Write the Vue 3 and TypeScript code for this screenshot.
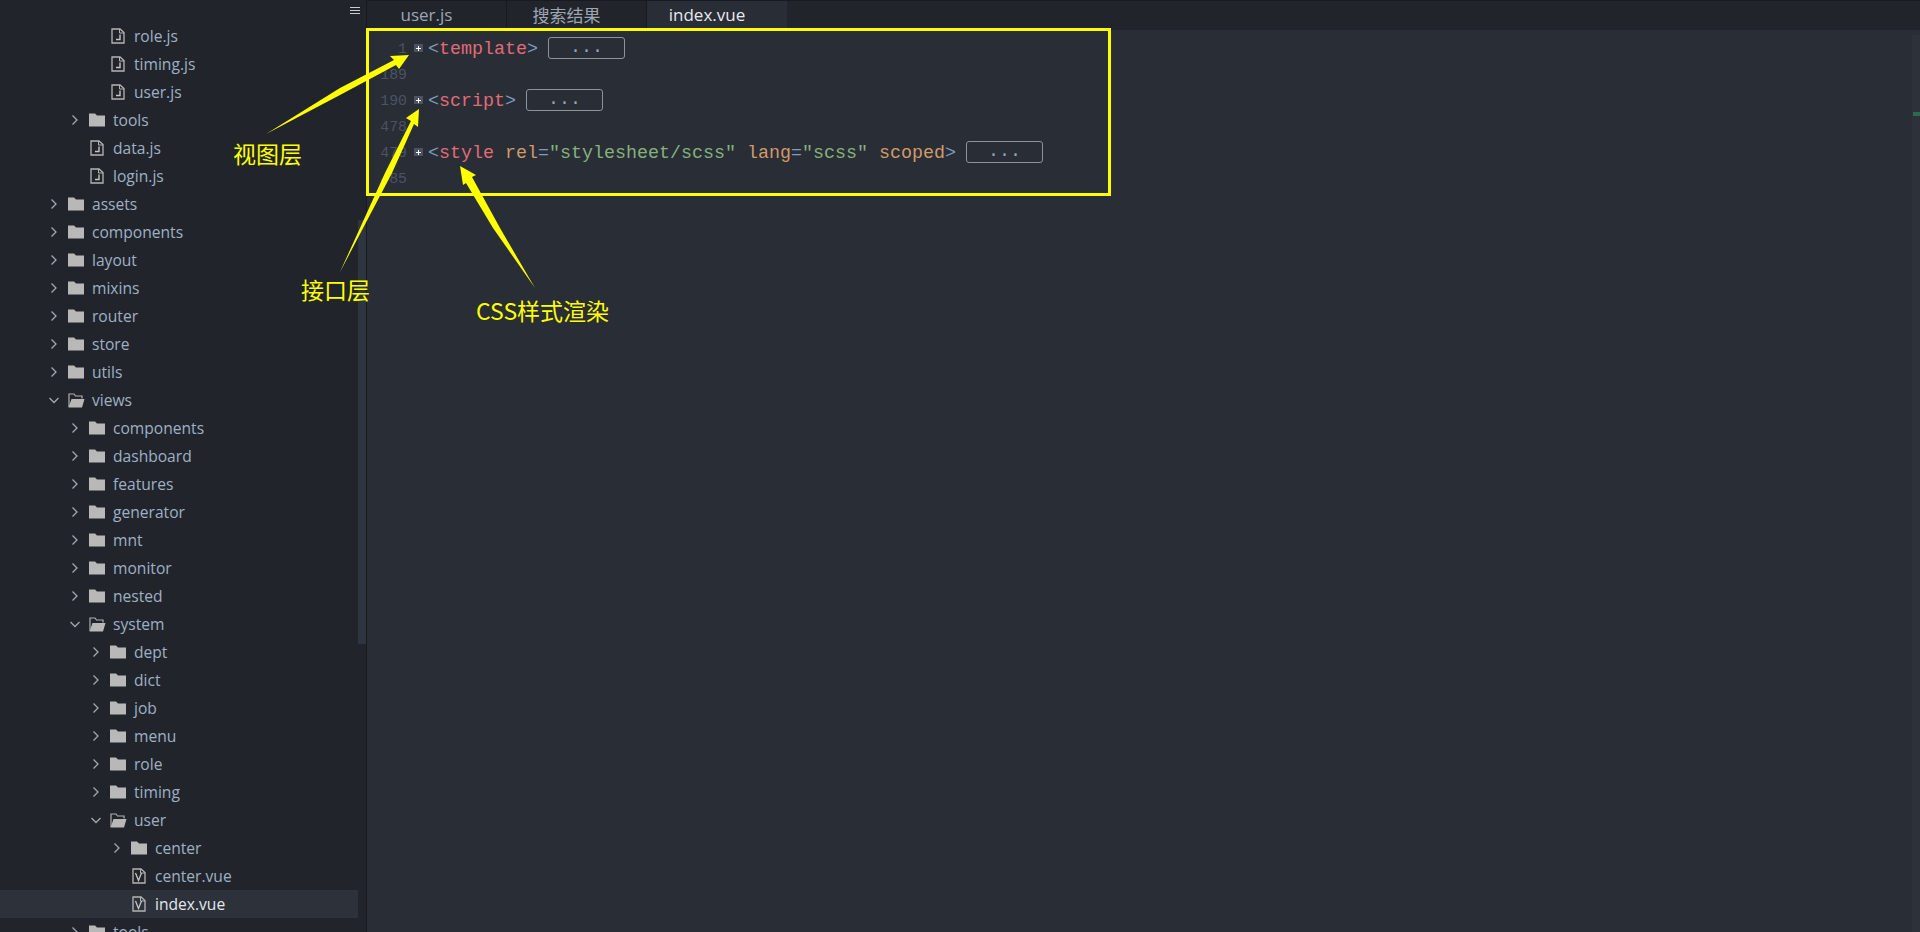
<script setup lang="ts">
type Kind = 'folder' | 'open' | 'js' | 'vue'
interface Row { name: string; level: number; kind: Kind; selected?: boolean }

const rows: Row[] = [
  { name: 'role.js', level: 2, kind: 'js' },
  { name: 'timing.js', level: 2, kind: 'js' },
  { name: 'user.js', level: 2, kind: 'js' },
  { name: 'tools', level: 1, kind: 'folder' },
  { name: 'data.js', level: 1, kind: 'js' },
  { name: 'login.js', level: 1, kind: 'js' },
  { name: 'assets', level: 0, kind: 'folder' },
  { name: 'components', level: 0, kind: 'folder' },
  { name: 'layout', level: 0, kind: 'folder' },
  { name: 'mixins', level: 0, kind: 'folder' },
  { name: 'router', level: 0, kind: 'folder' },
  { name: 'store', level: 0, kind: 'folder' },
  { name: 'utils', level: 0, kind: 'folder' },
  { name: 'views', level: 0, kind: 'open' },
  { name: 'components', level: 1, kind: 'folder' },
  { name: 'dashboard', level: 1, kind: 'folder' },
  { name: 'features', level: 1, kind: 'folder' },
  { name: 'generator', level: 1, kind: 'folder' },
  { name: 'mnt', level: 1, kind: 'folder' },
  { name: 'monitor', level: 1, kind: 'folder' },
  { name: 'nested', level: 1, kind: 'folder' },
  { name: 'system', level: 1, kind: 'open' },
  { name: 'dept', level: 2, kind: 'folder' },
  { name: 'dict', level: 2, kind: 'folder' },
  { name: 'job', level: 2, kind: 'folder' },
  { name: 'menu', level: 2, kind: 'folder' },
  { name: 'role', level: 2, kind: 'folder' },
  { name: 'timing', level: 2, kind: 'folder' },
  { name: 'user', level: 2, kind: 'open' },
  { name: 'center', level: 3, kind: 'folder' },
  { name: 'center.vue', level: 3, kind: 'vue' },
  { name: 'index.vue', level: 3, kind: 'vue', selected: true },
  { name: 'tools', level: 1, kind: 'folder' },
]

const tabs = [
  { name: 'user.js', active: false },
  { name: '搜索结果', active: false },
  { name: 'index.vue', active: true },
]

const indent = (level: number) => `${46 + 21 * level}px`
</script>

<template>
  <div class="app">
    <aside class="sidebar">
      <div class="menu-btn"><i></i><i></i><i></i></div>
      <div class="tree">
        <div
          v-for="(row, i) in rows"
          :key="i"
          class="row"
          :class="{ selected: row.selected }"
          :style="{ paddingLeft: indent(row.level) }"
        >
          <span class="chev">
            <svg v-if="row.kind === 'folder'" width="16" height="16" viewBox="0 0 16 16">
              <path d="M5.500 3.500 L10 8 L5.500 12.500" fill="none" stroke="#a3a8b0" stroke-width="1.300" />
            </svg>
            <svg v-else-if="row.kind === 'open'" width="16" height="16" viewBox="0 0 16 16">
              <path d="M3.500 6 L8 10.500 L12.500 6" fill="none" stroke="#a3a8b0" stroke-width="1.300" />
            </svg>
          </span>
          <span class="icon">
            <svg v-if="row.kind === 'folder'" width="16" height="14" viewBox="0 0 16 14">
              <path d="M0 0.500 H6 L8 2.500 H16 V13.500 H0 Z" fill="#b8b8b8" />
            </svg>
            <svg v-else-if="row.kind === 'open'" width="17" height="15" viewBox="0 0 17 15">
              <path d="M1 14 V1 H6 L7.500 3 H14 V5.500" fill="none" stroke="#b0b0b0" stroke-width="1.200" />
              <path d="M0.500 14.500 L3.500 6 H16.500 L14 14.500 Z" fill="#b8b8b8" />
            </svg>
            <svg v-else-if="row.kind === 'js'" class="file" width="14" height="16" viewBox="0 0 14 16">
              <path d="M1 1 H9 L13 4.500 V15 H1 Z" fill="none" stroke="#b4b4b4" stroke-width="1.300" />
              <path d="M8.500 1 V5 H13" fill="none" stroke="#b4b4b4" stroke-width="1" />
              <path d="M9 6.500 V11.500 H5" fill="none" stroke="#c4c4c4" stroke-width="1.400" />
            </svg>
            <svg v-else class="file" width="14" height="16" viewBox="0 0 14 16">
              <path d="M1 1 H9 L13 4.500 V15 H1 Z" fill="none" stroke="#b4b4b4" stroke-width="1.300" />
              <path d="M8.500 1 V5 H13" fill="none" stroke="#b4b4b4" stroke-width="1" />
              <path d="M3.500 5 L6.500 12.500 L9.500 5" fill="none" stroke="#c4c4c4" stroke-width="1.300" />
            </svg>
          </span>
          <span class="name">{{ row.name }}</span>
        </div>
      </div>
      <div class="side-scroll"></div>
    </aside>

    <main class="main">
      <nav class="tabs">
        <div v-for="tab in tabs" :key="tab.name" class="tab" :class="{ active: tab.active }">{{ tab.name }}</div>
      </nav>
      <section class="editor">
        <div class="line">
          <span class="num">1</span><span class="fold"></span>
          <code><span class="p">&lt;</span><span class="t">template</span><span class="p">&gt;</span> <span class="more">  ...  </span></code>
        </div>
        <div class="line"><span class="num">189</span></div>
        <div class="line">
          <span class="num">190</span><span class="fold"></span>
          <code><span class="p">&lt;</span><span class="t">script</span><span class="p">&gt;</span> <span class="more">  ...  </span></code>
        </div>
        <div class="line"><span class="num">478</span></div>
        <div class="line">
          <span class="num">479</span><span class="fold"></span>
          <code><span class="p">&lt;</span><span class="t">style</span> <span class="a">rel</span><span class="p">=</span><span class="s">"stylesheet/scss"</span> <span class="a">lang</span><span class="p">=</span><span class="s">"scss"</span> <span class="a">scoped</span><span class="p">&gt;</span> <span class="more">  ...  </span></code>
        </div>
        <div class="line"><span class="num">485</span></div>
        <div class="v-scroll"><span class="mark"></span></div>
      </section>
    </main>

    <div class="highlight"></div>
    <svg class="arrows" width="1920" height="932" viewBox="0 0 1920 932">
      <polygon points="266,134 340,88 394,60 390,56 409,55 399,69 396,65 340,95" fill="#ffff00" />
      <polygon points="340,272 385,173 411,121 406,118 419,109 418,127 414,124 392,173" fill="#ffff00" />
      <polygon points="535,288 500,228 472,177 476,175 460,166 463,185 466,183 493,228" fill="#ffff00" />
    </svg>
    <span class="label l1">视图层</span>
    <span class="label l2">接口层</span>
    <span class="label l3">CSS样式渲染</span>
  </div>
</template>

<style scoped>
.app {
  position: relative;
  display: flex;
  width: 1920px;
  height: 932px;
  overflow: hidden;
  background: #292d36;
  font-family: "Open Sans", "Noto Sans CJK SC", sans-serif;
}
.sidebar {
  position: relative;
  flex: 0 0 367px;
  box-sizing: border-box;
  height: 932px;
  padding-top: 22px;
  background: #21252b;
  border-right: 1px solid #181a1f;
  overflow: hidden;
}
.menu-btn {
  position: absolute;
  top: 7px;
  left: 350px;
  display: flex;
  flex-direction: column;
  gap: 2px;
}
.menu-btn i {
  display: block;
  width: 10px;
  height: 1px;
  background: #c8ccd2;
}
.tree {
  width: 358px;
}
.row {
  display: flex;
  align-items: center;
  height: 28px;
  box-sizing: border-box;
  color: #9fb0c6;
  font-size: 15.6px;
}
.row.selected {
  background: #2c313a;
  color: #e4e8ee;
}
.chev {
  display: flex;
  flex: 0 0 16px;
  justify-content: center;
  margin-right: 6px;
}
.icon {
  display: flex;
  flex: 0 0 24px;
  align-items: center;
}
.icon .file {
  margin-left: 1px;
}
.side-scroll {
  position: absolute;
  top: 220px;
  left: 358px;
  width: 8px;
  height: 424px;
  background: #2e3440;
}
.main {
  display: flex;
  flex: 1;
  flex-direction: column;
  min-width: 0;
}
.tabs {
  display: flex;
  flex: 0 0 30px;
  box-sizing: border-box;
  background: #21252b;
  border-top: 1px solid #181a1f;
}
.tab {
  display: flex;
  align-items: center;
  justify-content: center;
  box-sizing: border-box;
  width: 140px;
  height: 29px;
  padding: 0 20px 2px 0;
  color: #9da5b4;
  font-size: 17px;
  border-right: 1px solid #181a1f;
}
.tab.active {
  background: #292d36;
  color: #e6e9ee;
  border-right: none;
}
.editor {
  position: relative;
  flex: 1;
  padding-top: 5px;
}
.line {
  display: flex;
  align-items: center;
  height: 26px;
}
.num {
  box-sizing: border-box;
  flex: 0 0 40px;
  margin-top: 2px;
  text-align: right;
  color: #4b5363;
  font-family: "Liberation Mono", monospace;
  font-size: 14.8px;
}
.fold {
  position: relative;
  flex: 0 0 9px;
  height: 8px;
  margin: 0 5px 0 7px;
  background: #4b5363;
}
.fold::before,
.fold::after {
  content: "";
  position: absolute;
  background: #fff;
}
.fold::before {
  left: 2px;
  top: 3.5px;
  width: 5px;
  height: 1px;
}
.fold::after {
  left: 4px;
  top: 1.5px;
  width: 1px;
  height: 5px;
}
code {
  margin-top: 2px;
  font-family: "Liberation Mono", monospace;
  font-size: 18.33px;
  white-space: pre;
  color: #abb2bf;
}
.p { color: #7f9cc0; }
.t { color: #e06c75; }
.a { color: #d19a66; }
.s { color: #85b27a; }
.more {
  display: inline-block;
  box-sizing: border-box;
  width: 77px;
  height: 22px;
  margin: 0 0 2px -1px;
  line-height: 19px;
  text-align: center;
  vertical-align: middle;
  color: #8ea3bd;
  border: 1px solid #8d929c;
  border-radius: 3px;
}
.v-scroll {
  position: absolute;
  top: 5px;
  right: 0;
  bottom: 0;
  width: 8px;
  background: #2d313a;
}
.mark {
  position: absolute;
  top: 77px;
  left: 1px;
  width: 7px;
  height: 4px;
  background: #2b6a4f;
}
.highlight {
  position: absolute;
  left: 366px;
  top: 28px;
  width: 745px;
  height: 168px;
  box-sizing: border-box;
  border: 3px solid #ffff00;
}
.arrows {
  position: absolute;
  left: 0;
  top: 0;
  pointer-events: none;
}
.label {
  position: absolute;
  color: #ffff00;
  font-family: "Noto Sans CJK SC", sans-serif;
  font-size: 23px;
  line-height: 30px;
  white-space: nowrap;
}
.l1 { left: 233px; top: 138px; }
.l2 { left: 301px; top: 274px; }
.l3 { left: 476px; top: 295px; }
</style>
